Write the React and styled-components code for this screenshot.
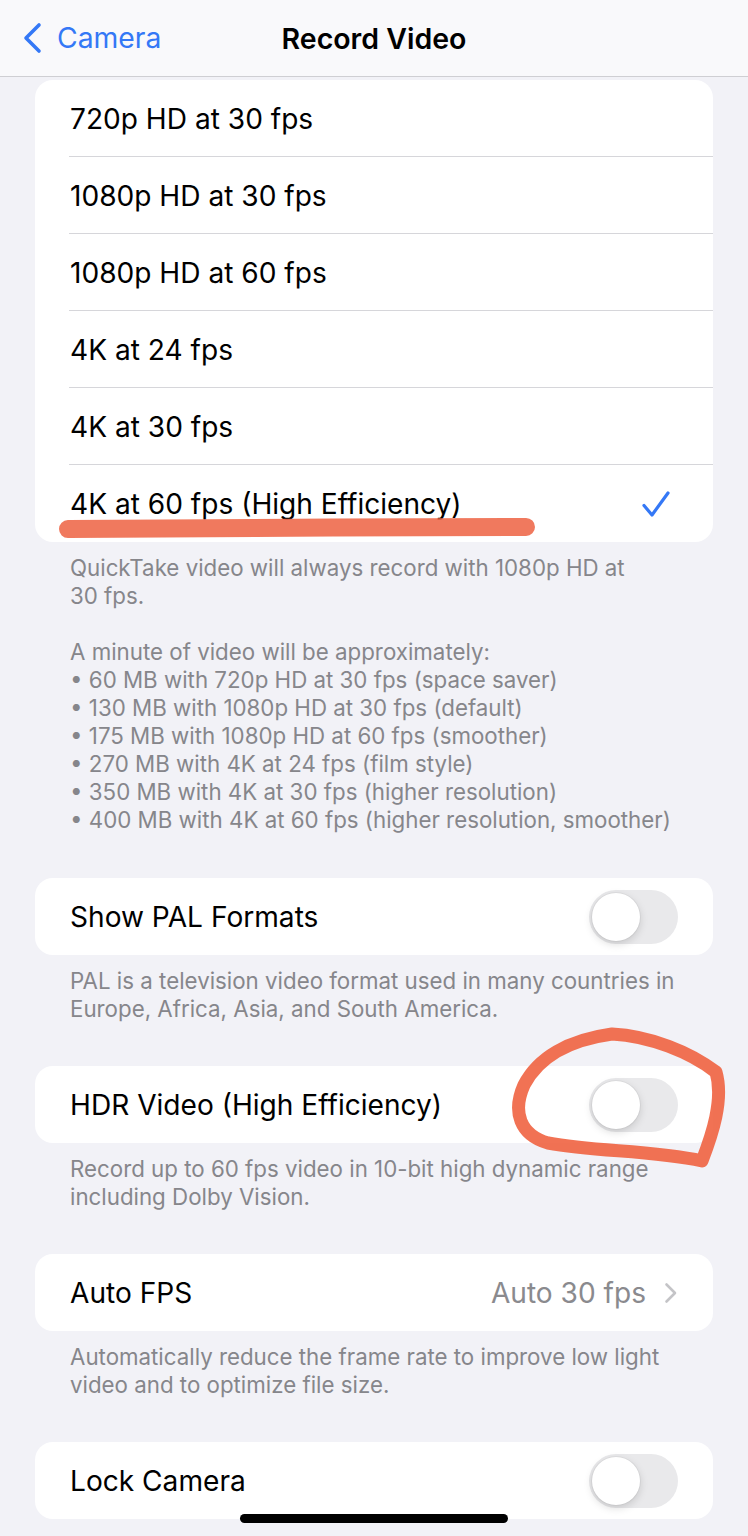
import React from "react";
import styled, { createGlobalStyle } from "styled-components";

const Global = createGlobalStyle`
  html, body { margin: 0; padding: 0; background: #f2f2f7; }
  body { font-family: Inter, "Noto Sans", "Liberation Sans", sans-serif; -webkit-font-smoothing: antialiased; }
`;

const Page = styled.div`
  position: relative;
  width: 748px;
  height: 1536px;
  overflow: hidden;
  background: #f2f2f7;
`;

const NavBar = styled.div`
  height: 77px;
  box-sizing: border-box;
  background: #f9f9fb;
  border-bottom: 1.5px solid #cfcfd3;
  display: flex;
  align-items: center;
  position: relative;
  padding-left: 21px;
  padding-bottom: 1px;
`;

const BackButton = styled.div`
  display: flex;
  align-items: center;
  gap: 14px;
  color: #3478f6;
  font-size: 28.3px;
  letter-spacing: 0;
`;

const Title = styled.div`
  position: absolute;
  left: 0;
  right: 0;
  top: 0;
  height: 76px;
  display: flex;
  align-items: center;
  justify-content: center;
  font-size: 28.5px;
  font-weight: 600;
  color: #000;
  letter-spacing: 0;
  pointer-events: none;
`;

const Content = styled.div`
  padding: 3px 35px 0;
  display: flex;
  flex-direction: column;
`;

const Card = styled.div`
  background: #fff;
  border-radius: 18px;
  overflow: hidden;
  margin-top: ${(p) => p.$mt || 0}px;
`;

const Row = styled.div`
  height: 77px;
  display: flex;
  align-items: center;
  padding-left: 35px;
  position: relative;
  box-sizing: border-box;
  &::after {
    content: "";
    display: ${(p) => (p.$sep ? "block" : "none")};
    position: absolute;
    left: 34px;
    right: 0;
    bottom: 0;
    height: 1px;
    background: #d6d6da;
  }
`;

const Label = styled.div`
  flex: 1;
  font-size: 28.1px;
  color: #000;
  letter-spacing: 0;
`;

const Value = styled.div`
  font-size: 28.1px;
  color: #8a8a8e;
  letter-spacing: 0;
  margin-right: 18px;
`;

const Trailing = styled.div`
  display: flex;
  align-items: center;
  padding-right: ${(p) => p.$pr || 35}px;
`;

const Footer = styled.div`
  padding: 12px 35px 0;
  font-size: 22.3px;
  line-height: 28px;
  color: #86868b;
  letter-spacing: 0;
  white-space: nowrap;
`;

const Track = styled.div`
  width: 89px;
  height: 54px;
  border-radius: 27px;
  background: #e9e9eb;
  position: relative;
`;

const Knob = styled.div`
  position: absolute;
  left: 3px;
  top: 3px;
  width: 48px;
  height: 48px;
  border-radius: 50%;
  background: #fff;
  box-shadow: 0 3px 8px rgba(0, 0, 0, 0.15), 0 0 0 1px rgba(0, 0, 0, 0.04);
`;

const HomeIndicator = styled.div`
  position: absolute;
  left: 240px;
  top: 1514px;
  width: 268px;
  height: 9px;
  border-radius: 5px;
  background: #000;
`;

const Markup = styled.svg`
  position: absolute;
  left: 0;
  top: 0;
  pointer-events: none;
`;

const Toggle = () => (
  <Track>
    <Knob />
  </Track>
);

const Check = () => (
  <svg width="30" height="28" viewBox="0 0 30 28">
    <path d="M3 15.5 L11 25 L27 3" fill="none" stroke="#3478f6" strokeWidth="3.2" strokeLinecap="round" strokeLinejoin="round" />
  </svg>
);

const Chevron = () => (
  <svg width="14" height="22" viewBox="0 0 14 22">
    <path d="M2.5 2.5 L11 11 L2.5 19.5" fill="none" stroke="#c4c4c7" strokeWidth="2.6" strokeLinecap="round" strokeLinejoin="round" />
  </svg>
);

const BackChevron = () => (
  <svg width="22" height="32" viewBox="0 0 22 32">
    <path d="M18 3 L5 16 L18 29" fill="none" stroke="#3478f6" strokeWidth="3.6" strokeLinecap="round" strokeLinejoin="round" />
  </svg>
);

const formats = [
  "720p HD at 30 fps",
  "1080p HD at 30 fps",
  "1080p HD at 60 fps",
  "4K at 24 fps",
  "4K at 30 fps",
  "4K at 60 fps (High Efficiency)",
];

export default function App() {
  return (
    <Page>
      <Global />
      <NavBar>
        <BackButton>
          <BackChevron />
          <span>Camera</span>
        </BackButton>
        <Title>Record Video</Title>
      </NavBar>
      <Content>
        <Card>
          {formats.map((f, i) => (
            <Row key={f} $sep={i < formats.length - 1}>
              <Label>{f}</Label>
              {i === formats.length - 1 && (
                <Trailing $pr={42}>
                  <Check />
                </Trailing>
              )}
            </Row>
          ))}
        </Card>
        <Footer>
          QuickTake video will always record with 1080p HD at
          <br />
          30 fps.
          <br />
          <br />
          A minute of video will be approximately:
          <br />• 60 MB with 720p HD at 30 fps (space saver)
          <br />• 130 MB with 1080p HD at 30 fps (default)
          <br />• 175 MB with 1080p HD at 60 fps (smoother)
          <br />• 270 MB with 4K at 24 fps (film style)
          <br />• 350 MB with 4K at 30 fps (higher resolution)
          <br />• 400 MB with 4K at 60 fps (higher resolution, smoother)
        </Footer>
        <Card $mt={44}>
          <Row>
            <Label>Show PAL Formats</Label>
            <Trailing>
              <Toggle />
            </Trailing>
          </Row>
        </Card>
        <Footer>
          PAL is a television video format used in many countries in
          <br />
          Europe, Africa, Asia, and South America.
        </Footer>
        <Card $mt={43}>
          <Row>
            <Label>HDR Video (High Efficiency)</Label>
            <Trailing>
              <Toggle />
            </Trailing>
          </Row>
        </Card>
        <Footer>
          Record up to 60 fps video in 10-bit high dynamic range
          <br />
          including Dolby Vision.
        </Footer>
        <Card $mt={43}>
          <Row>
            <Label>Auto FPS</Label>
            <Trailing>
              <Value>Auto 30 fps</Value>
              <Chevron />
            </Trailing>
          </Row>
        </Card>
        <Footer>
          Automatically reduce the frame rate to improve low light
          <br />
          video and to optimize file size.
        </Footer>
        <Card $mt={43}>
          <Row>
            <Label>Lock Camera</Label>
            <Trailing>
              <Toggle />
            </Trailing>
          </Row>
        </Card>
      </Content>
      <Markup width="748" height="1536" viewBox="0 0 748 1536">
        <path d="M68 529 C 200 528, 380 527, 526 527" fill="none" stroke="#ee6a4c" strokeOpacity="0.9" strokeWidth="18" strokeLinecap="round" />
        <path
          d="M612 1034 C 568 1040, 538 1058, 524 1085 C 512 1112, 520 1135, 548 1143 C 595 1152, 652 1150, 702 1161 C 712 1135, 724 1100, 716 1072 C 690 1052, 650 1036, 612 1034 Z"
          fill="none"
          stroke="#ef5f3c"
          strokeOpacity="0.88"
          strokeWidth="13"
          strokeLinejoin="round"
        />
      </Markup>
      <HomeIndicator />
    </Page>
  );
}
